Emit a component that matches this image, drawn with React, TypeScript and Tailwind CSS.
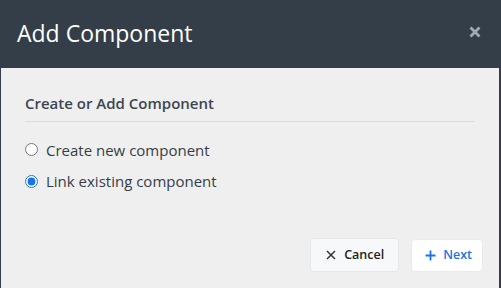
import { useState } from "react";

const App = () => {
    const [choice, setchoice] = useState("link");

    return (
        <div
            className="w-[501px] h-[288px] flex flex-col bg-[#343e48] overflow-hidden"
            style={{ fontFamily: '"Open Sans", "Noto Sans", sans-serif' }}
        >
            <div className="h-[68px] flex items-center justify-between pl-[17px] pr-[20px] shrink-0">
                <h1 className="text-[23px] text-white mt-[-2px]">Add Component</h1>
                <svg width="12" height="12" viewBox="0 0 12 12" className="mt-[-4px]">
                    <path d="M1.5 1.5 L10.5 10.5 M10.5 1.5 L1.5 10.5" stroke="#a3a9af" strokeWidth="2.8" />
                </svg>
            </div>
            <div className="flex-1 ml-[1px] mr-[2px] bg-[#efefef] flex flex-col px-[24px]">
                <div className="pt-[24px] pb-[6px] border-b border-[#dcdde0] text-[15px] font-semibold text-[#3d4650]">
                    Create or Add Component
                </div>
                <div className="flex flex-col gap-[9px] mt-[17px] text-[15px] text-[#343e48]">
                    <label className="flex items-center gap-[8px]">
                        <input
                            type="radio"
                            name="c"
                            className="w-[13px] h-[13px] m-0"
                            checked={choice === "create"}
                            onChange={() => setchoice("create")}
                        />
                        Create new component
                    </label>
                    <label className="flex items-center gap-[8px]">
                        <input
                            type="radio"
                            name="c"
                            className="w-[13px] h-[13px] m-0 accent-[#1a73e8]"
                            checked={choice === "link"}
                            onChange={() => setchoice("link")}
                        />
                        Link existing component
                    </label>
                </div>
                <div className="mt-auto mb-[16px] flex justify-end gap-[12px] mr-[-8px]">
                    <button className="h-[34px] pl-[15px] pr-[14px] flex items-center gap-[8px] rounded-[4px] bg-[#f7f8fa] text-[#222] text-[12.5px] font-semibold border border-[#e6e7ea]">
                        <svg width="10" height="10" viewBox="0 0 10 10">
                            <path d="M1 1 L9 9 M9 1 L1 9" stroke="#333" strokeWidth="1.5" />
                        </svg>
                        Cancel
                    </button>
                    <button className="h-[33px] mt-[1px] pl-[13px] pr-[10px] flex items-center gap-[7px] rounded-[4px] bg-white text-[#1a73e8] text-[12.5px] font-semibold border border-[#e9eaec]">
                        <svg width="11" height="11" viewBox="0 0 11 11">
                            <path d="M5.5 0.5 V10.5 M0.5 5.5 H10.5" stroke="#1a73e8" strokeWidth="1.8" />
                        </svg>
                        Next
                    </button>
                </div>
            </div>
        </div>
    );
};

export default App;
